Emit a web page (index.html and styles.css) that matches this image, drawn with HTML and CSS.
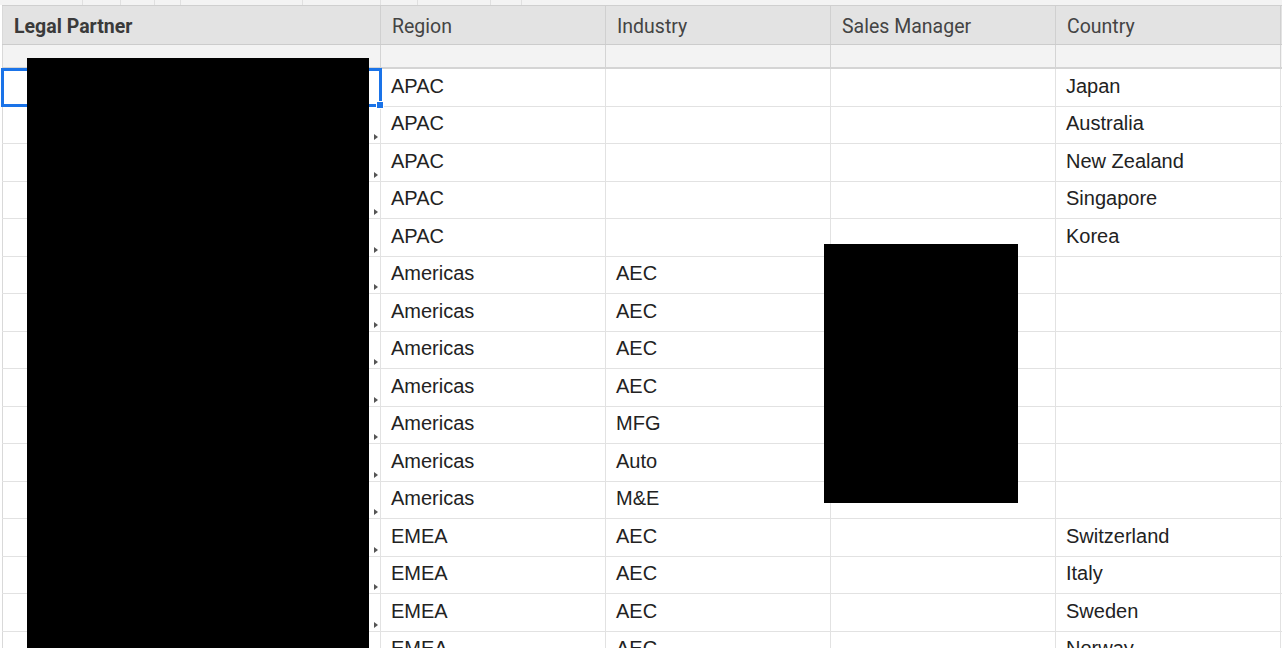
FILE: index.html
```html
<!DOCTYPE html>
<html>
<head>
<meta charset="utf-8">
<link rel="stylesheet" href="styles.css">
</head>
<body>
<div class="page">
  <div class="topstrip">
    <span class="ts" style="width:83px"></span><span class="ts" style="width:38px"></span><span class="ts" style="width:34px"></span><span class="ts" style="width:26px"></span><span class="ts" style="width:122px"></span><span class="ts" style="width:78px"></span><span class="ts" style="width:37px"></span><span class="ts" style="width:73px"></span><span class="ts" style="width:31px"></span>
  </div>
  <div class="sheet">
    <div class="row header">
      <div class="cell c1 bold">Legal Partner</div>
      <div class="cell">Region</div>
      <div class="cell">Industry</div>
      <div class="cell">Sales Manager</div>
      <div class="cell">Country</div>
    </div>
    <div class="row filter">
      <div class="cell c1"></div><div class="cell"></div><div class="cell"></div><div class="cell"></div><div class="cell"></div>
    </div>
    <div class="body">
      <div class="row data"><div class="cell c1 selected"><span class="handle"></span></div><div class="cell">APAC</div><div class="cell"></div><div class="cell"></div><div class="cell">Japan</div></div>
      <div class="row data"><div class="cell c1"><span class="tri"></span></div><div class="cell">APAC</div><div class="cell"></div><div class="cell"></div><div class="cell">Australia</div></div>
      <div class="row data"><div class="cell c1"><span class="tri"></span></div><div class="cell">APAC</div><div class="cell"></div><div class="cell"></div><div class="cell">New Zealand</div></div>
      <div class="row data"><div class="cell c1"><span class="tri"></span></div><div class="cell">APAC</div><div class="cell"></div><div class="cell"></div><div class="cell">Singapore</div></div>
      <div class="row data"><div class="cell c1"><span class="tri"></span></div><div class="cell">APAC</div><div class="cell"></div><div class="cell"></div><div class="cell">Korea</div></div>
      <div class="row data"><div class="cell c1"><span class="tri"></span></div><div class="cell">Americas</div><div class="cell">AEC</div><div class="cell"></div><div class="cell"></div></div>
      <div class="row data"><div class="cell c1"><span class="tri"></span></div><div class="cell">Americas</div><div class="cell">AEC</div><div class="cell"></div><div class="cell"></div></div>
      <div class="row data"><div class="cell c1"><span class="tri"></span></div><div class="cell">Americas</div><div class="cell">AEC</div><div class="cell"></div><div class="cell"></div></div>
      <div class="row data"><div class="cell c1"><span class="tri"></span></div><div class="cell">Americas</div><div class="cell">AEC</div><div class="cell"></div><div class="cell"></div></div>
      <div class="row data"><div class="cell c1"><span class="tri"></span></div><div class="cell">Americas</div><div class="cell">MFG</div><div class="cell"></div><div class="cell"></div></div>
      <div class="row data"><div class="cell c1"><span class="tri"></span></div><div class="cell">Americas</div><div class="cell">Auto</div><div class="cell"></div><div class="cell"></div></div>
      <div class="row data"><div class="cell c1"><span class="tri"></span></div><div class="cell">Americas</div><div class="cell">M&amp;E</div><div class="cell"></div><div class="cell"></div></div>
      <div class="row data"><div class="cell c1"><span class="tri"></span></div><div class="cell">EMEA</div><div class="cell">AEC</div><div class="cell"></div><div class="cell">Switzerland</div></div>
      <div class="row data"><div class="cell c1"><span class="tri"></span></div><div class="cell">EMEA</div><div class="cell">AEC</div><div class="cell"></div><div class="cell">Italy</div></div>
      <div class="row data"><div class="cell c1"><span class="tri"></span></div><div class="cell">EMEA</div><div class="cell">AEC</div><div class="cell"></div><div class="cell">Sweden</div></div>
      <div class="row data"><div class="cell c1"><span class="tri"></span></div><div class="cell">EMEA</div><div class="cell">AEC</div><div class="cell"></div><div class="cell">Norway</div></div>
    </div>
  </div>
  <div class="redact redact-a"></div>
  <div class="redact redact-b"></div>
</div>
</body>
</html>
```

FILE: styles.css
```css
html, body {
  margin: 0;
  padding: 0;
  background: #ffffff;
  overflow: hidden;
}
.page {
  position: relative;
  width: 1282px;
  height: 648px;
  overflow: hidden;
}
.topstrip {
  height: 5px;
  background: #f3f3f3;
  display: flex;
}
.ts {
  height: 5px;
  box-sizing: border-box;
  border-right: 1px solid #e0e0e0;
}
.sheet {
  padding-left: 2px;
}
.row {
  display: flex;
}
.cell {
  box-sizing: border-box;
  width: 225px;
  flex: none;
  border-right: 1px solid #e2e2e2;
  display: flex;
  align-items: center;
  padding-left: 10px;
  position: relative;
  white-space: nowrap;
}
.cell.c1 {
  width: 379px;
  border-left: 1px solid #d9d9d9;
}
.header {
  height: 40px;
  background: #e3e3e3;
  border-top: 1px solid #cfcfcf;
  border-bottom: 1px solid #cccccc;
  box-sizing: border-box;
  font-family: Roboto, "Liberation Sans", sans-serif;
  font-size: 19.5px;
  color: #444444;
}
.header .cell {
  padding-left: 11px;
  border-right-color: #d0d0d0;
  padding-top: 3px;
}
.header .bold {
  font-weight: bold;
  color: #3a3a3a;
}
.filter {
  height: 24px;
  background: #f3f3f3;
  border-bottom: 2px solid #d4d4d4;
  box-sizing: border-box;
}
.filter .cell {
  border-right-color: #d4d4d4;
}
.data {
  height: 37.5px;
  box-sizing: border-box;
  border-bottom: 1px solid #e2e2e2;
  font-family: "Liberation Sans", Arial, sans-serif;
  font-size: 20px;
  color: #222222;
}
.data .cell {
  padding-bottom: 2px;
}
.selected {
  outline: 3px solid #1a73e8;
  outline-offset: -2px;
  z-index: 2;
}
.handle {
  position: absolute;
  right: -4px;
  bottom: -3px;
  width: 6px;
  height: 6px;
  background: #1a73e8;
  border: 1px solid #ffffff;
}
.tri {
  position: absolute;
  right: 2px;
  bottom: 3px;
  width: 0;
  height: 0;
  border-top: 3px solid transparent;
  border-bottom: 3px solid transparent;
  border-left: 4px solid #555555;
}
.redact {
  position: absolute;
  background: #000000;
  z-index: 5;
}
.redact-a {
  left: 27px;
  top: 58px;
  width: 342px;
  height: 600px;
}
.redact-b {
  left: 824px;
  top: 244px;
  width: 194px;
  height: 259px;
}
```
